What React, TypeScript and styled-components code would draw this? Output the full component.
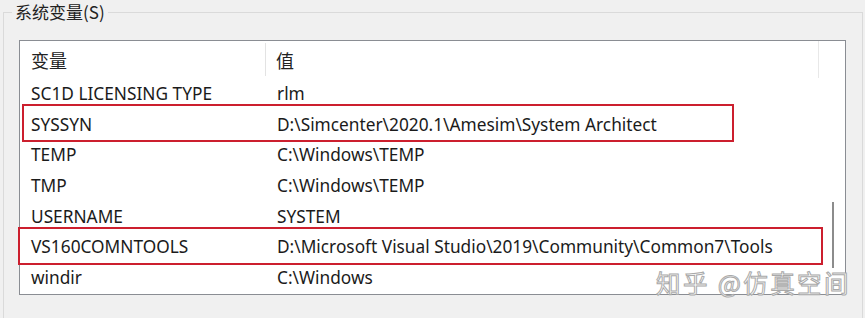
import React from "react";
import styled, { createGlobalStyle } from "styled-components";

const GlobalStyle = createGlobalStyle`
  html, body {
    margin: 0;
    padding: 0;
    background: #f0f0f0;
  }
  body {
    font-family: "Noto Sans", "Noto Sans CJK SC", sans-serif;
    color: #1b1b1b;
  }
`;

const Frame = styled.div`
  width: 865px;
  height: 318px;
  overflow: hidden;
  box-sizing: border-box;
  padding: 12px 0 0 3px;
  background: #f0f0f0;
`;

const GroupBox = styled.div`
  position: relative;
  width: 860px;
  height: 330px;
  box-sizing: border-box;
  border: 1px solid #dadada;
  padding: 27px 0 0 15px;
`;

const Legend = styled.div`
  position: absolute;
  top: -13px;
  left: 8px;
  padding: 0 3px;
  background: #f0f0f0;
  font-family: "Noto Sans CJK SC", "Noto Sans", sans-serif;
  font-size: 17px;
  line-height: 24px;
  color: #222;
`;

const ListBox = styled.div`
  width: 827px;
  height: 255px;
  box-sizing: border-box;
  border: 1px solid #8a8d93;
  background: #ffffff;
  display: flex;
`;

const Content = styled.div`
  width: 799px;
  display: flex;
  flex-direction: column;
`;

const HeaderRow = styled.div`
  display: grid;
  grid-template-columns: 246px 1fr;
  height: 37px;
  border-right: 1px solid #e8e8e8;
`;

const HeaderCell = styled.div<{ $first?: boolean }>`
  display: flex;
  align-items: center;
  padding-left: ${(p) => (p.$first ? "11px" : "10px")};
  border-right: ${(p) => (p.$first ? "1px solid #e3e3e3" : "none")};
  margin: 2px 0;
  font-family: "Noto Sans CJK SC", "Noto Sans", sans-serif;
  font-size: 18px;
  color: #222;
`;

const Row = styled.div`
  position: relative;
  display: grid;
  grid-template-columns: 247px 1fr;
  height: 30.7px;
`;

const Cell = styled.div<{ $first?: boolean }>`
  display: flex;
  align-items: center;
  padding-left: ${(p) => (p.$first ? "11px" : "10px")};
  font-size: 17.3px;
  white-space: nowrap;
  color: #1b1b1b;
`;

const Highlight = styled.div<{ $left: number; $width: number; $top: number; $bottom: number }>`
  position: absolute;
  left: ${(p) => p.$left}px;
  width: ${(p) => p.$width}px;
  top: ${(p) => p.$top}px;
  bottom: ${(p) => p.$bottom}px;
  box-sizing: border-box;
  border: 2px solid #cc1f2e;
  pointer-events: none;
`;

const ScrollTrack = styled.div`
  flex: 1;
  display: flex;
  padding: 161px 0 0 13px;
`;

const Thumb = styled.div`
  width: 2px;
  height: 66px;
  background: #8c8c8c;
`;

const Watermark = styled.div`
  position: absolute;
  left: 652px;
  top: 255px;
  font-family: "Noto Sans CJK SC", sans-serif;
  font-size: 24.5px;
  line-height: 30px;
  letter-spacing: 2.4px;
  color: #ffffff;
  -webkit-text-stroke: 1px #a9a9a9;
  white-space: pre;
`;

type Item = {
  name: string;
  value: string;
  hl?: { left: number; width: number; top: number; bottom: number };
};

const items: Item[] = [
  { name: "SC1D LICENSING TYPE", value: "rlm" },
  {
    name: "SYSSYN",
    value: "D:\\Simcenter\\2020.1\\Amesim\\System Architect",
    hl: { left: 2, width: 712, top: -5, bottom: -3 },
  },
  { name: "TEMP", value: "C:\\Windows\\TEMP" },
  { name: "TMP", value: "C:\\Windows\\TEMP" },
  { name: "USERNAME", value: "SYSTEM" },
  {
    name: "VS160COMNTOOLS",
    value: "D:\\Microsoft Visual Studio\\2019\\Community\\Common7\\Tools",
    hl: { left: -2, width: 805, top: -4, bottom: -3 },
  },
  { name: "windir", value: "C:\\Windows" },
];

export default function App() {
  return (
    <>
      <GlobalStyle />
      <Frame>
        <GroupBox>
          <Legend>系统变量(S)</Legend>
          <ListBox>
            <Content>
              <HeaderRow>
                <HeaderCell $first>变量</HeaderCell>
                <HeaderCell>值</HeaderCell>
              </HeaderRow>
              {items.map((it) => (
                <Row key={it.name}>
                  <Cell $first>{it.name}</Cell>
                  <Cell>{it.value}</Cell>
                  {it.hl && (
                    <Highlight
                      $left={it.hl.left}
                      $width={it.hl.width}
                      $top={it.hl.top}
                      $bottom={it.hl.bottom}
                    />
                  )}
                </Row>
              ))}
            </Content>
            <ScrollTrack>
              <Thumb />
            </ScrollTrack>
          </ListBox>
          <Watermark>知乎 @仿真空间</Watermark>
        </GroupBox>
      </Frame>
    </>
  );
}
